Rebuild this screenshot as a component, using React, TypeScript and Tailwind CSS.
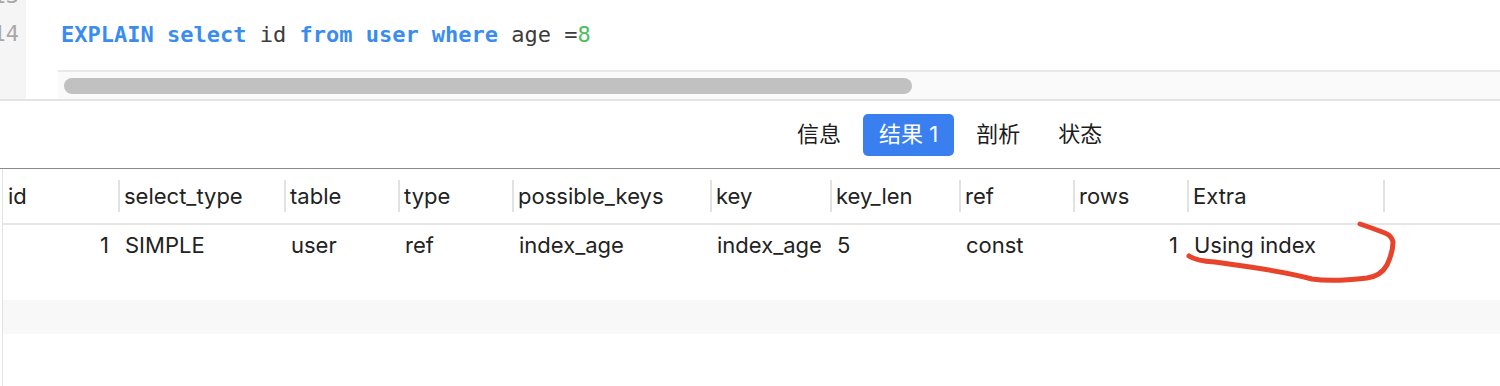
import React from 'react';

const columns = [
  { name: 'id', width: 115, value: '1', right: true },
  { name: 'select_type', width: 166, value: 'SIMPLE' },
  { name: 'table', width: 114, value: 'user' },
  { name: 'type', width: 114, value: 'ref' },
  { name: 'possible_keys', width: 198, value: 'index_age' },
  { name: 'key', width: 120, value: 'index_age' },
  { name: 'key_len', width: 129, value: '5' },
  { name: 'ref', width: 114, value: 'const' },
  { name: 'rows', width: 114, value: '1', right: true },
  { name: 'Extra', width: 196, value: 'Using index' },
];

const tabs = ['信息', '结果 1', '剖析', '状态'];

const mono = "font-['DejaVu_Sans_Mono',monospace]";
const ui = "font-['Inter','Noto_Sans_CJK_SC',sans-serif]";

export default function App() {
  return (
    <div className={`relative w-[1500px] h-[386px] overflow-hidden bg-white ${ui}`}>
      {/* Editor */}
      <div className="flex h-[99px]">
        <div className={`w-[26px] shrink-0 bg-[#f5f5f5] text-[22px] text-[#a8a8a8] overflow-hidden ${mono}`}>
          <div className="-mt-[23px]">
            <div className="w-[19px] h-[38px] leading-[38px] flex justify-end">13</div>
            <div className="w-[19px] h-[38px] leading-[38px] flex justify-end">14</div>
          </div>
        </div>
        <div className="flex-1 flex flex-col">
          <div className={`h-[38px] leading-[38px] mt-[16px] pl-[35px] text-[22px] whitespace-pre ${mono}`}>
            <span className="font-bold text-[#3a8ded]">EXPLAIN select</span>
            <span className="text-[#3c3c3c]"> id </span>
            <span className="font-bold text-[#3a8ded]">from user where</span>
            <span className="text-[#3c3c3c]"> age =</span>
            <span className="text-[#4fbe5f]">8</span>
          </div>
          <div className="mt-auto ml-[32px] h-[29px] border-t-2 border-[#e8e8e8] bg-[#fafafa] flex items-center pl-[6px]">
            <div className="w-[848px] h-[16px] rounded-full bg-[#c1c1c1]" />
          </div>
        </div>
      </div>
      <div className="h-[2px] bg-[#e4e4e4]" />

      {/* Tabs */}
      <div className="h-[68px] flex items-center gap-[6px] pl-[781px] border-b border-[#8a8a8a] text-[22px] text-[#1c1c1c]">
        {tabs.map((t, i) => (
          <div
            key={t}
            className={`h-[42px] px-[16px] flex items-center rounded-[5px] ${
              i === 1 ? 'bg-[#3a7ff0] text-white' : ''
            }`}
          >
            {t}
          </div>
        ))}
      </div>

      {/* Result grid */}
      <div className="ml-[2px] border-l border-[#e3e3e3] text-[22px] text-[#222]">
        <div className="flex h-[56px] items-center border-b-2 border-[#e6e6e6]">
          {columns.map((c, i) => (
            <div
              key={c.name}
              style={{ width: c.width }}
              className={`h-[32px] flex items-center pl-[4px] ${
                i > 0 ? 'border-l-2 border-[#e2e2e2]' : 'pl-[5px]'
              }`}
            >
              {c.name}
            </div>
          ))}
          <div className="h-[32px] border-l-2 border-[#e2e2e2]" />
        </div>
        <div className="flex h-[40px] items-center">
          {columns.map((c) => (
            <div
              key={c.name}
              style={{ width: c.width }}
              className={`pl-[7px] pr-[9px] ${c.right ? 'text-right' : ''}`}
            >
              {c.value}
            </div>
          ))}
        </div>
        <div className="h-[35px]" />
        <div className="h-[34px] bg-[#f8f8f8]" />
        <div className="h-[60px]" />
      </div>

      {/* Hand-drawn annotation */}
      <svg className="absolute left-0 top-0 pointer-events-none" width="1500" height="386">
        <path
          d="M1189 256 Q1196 261 1215 262 L1250 267 Q1290 273 1312 279 Q1332 282 1367 278 Q1381 276 1387 265 Q1393 252 1393 242 Q1392 236 1385 233 Q1372 228 1360 224"
          fill="none"
          stroke="#e8432b"
          strokeWidth="5"
          strokeLinecap="round"
          strokeLinejoin="round"
        />
      </svg>
    </div>
  );
}
